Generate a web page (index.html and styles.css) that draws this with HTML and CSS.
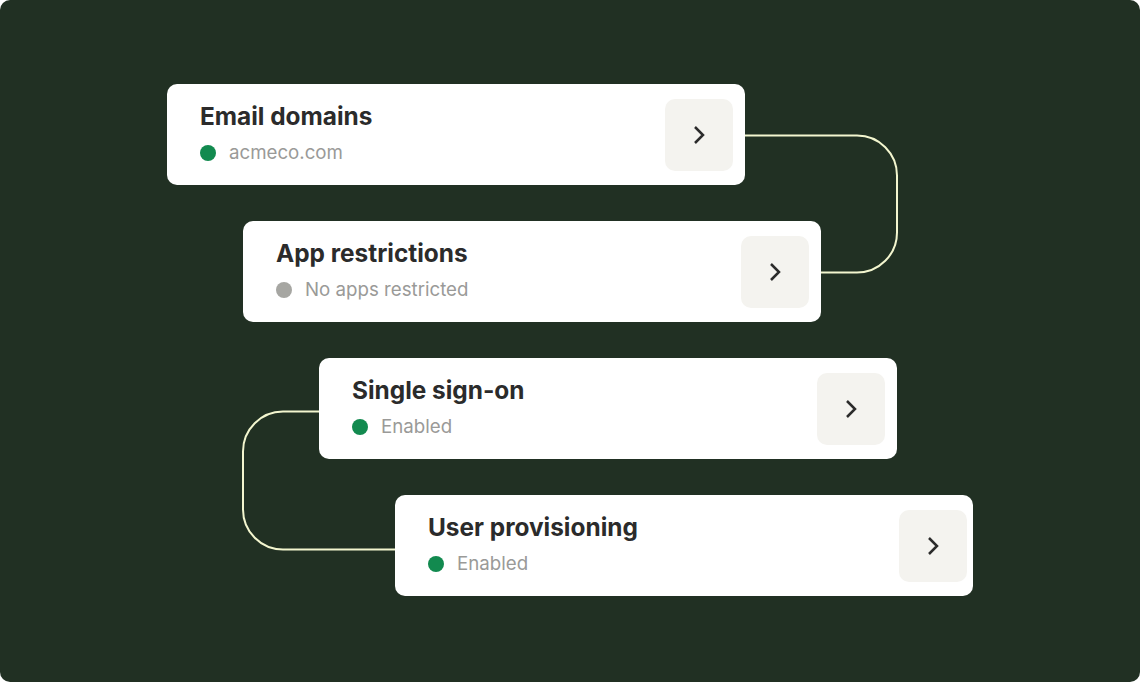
FILE: index.html
```html
<!DOCTYPE html>
<html lang="en">
<head>
    <meta charset="UTF-8">
    <meta name="viewport" content="width=device-width, initial-scale=1.0">
    <title>Access settings</title>
    <link rel="stylesheet" href="styles.css">
</head>
<body>
    <div class="frame">
        <svg class="links" width="1140" height="682" viewBox="0 0 1140 682">
            <path d="M745 135.5 H857 A40 40 0 0 1 897 175.5 V232.5 A40 40 0 0 1 857 272.5 H821" />
            <path d="M319 411.5 H283 A40 40 0 0 0 243 451.5 V509.5 A40 40 0 0 0 283 549.5 H395" />
        </svg>

        <div class="stack">
            <div class="card step-0">
                <div class="info">
                    <div class="title">Email domains</div>
                    <div class="status"><span class="dot on"></span>acmeco.com</div>
                </div>
                <button class="go" type="button">
                    <svg width="12" height="20" viewBox="0 0 12 20"><path d="M2 2 L10 10 L2 18" /></svg>
                </button>
            </div>

            <div class="card step-1">
                <div class="info">
                    <div class="title">App restrictions</div>
                    <div class="status"><span class="dot off"></span>No apps restricted</div>
                </div>
                <button class="go" type="button">
                    <svg width="12" height="20" viewBox="0 0 12 20"><path d="M2 2 L10 10 L2 18" /></svg>
                </button>
            </div>

            <div class="card step-2">
                <div class="info">
                    <div class="title">Single sign-on</div>
                    <div class="status"><span class="dot on"></span>Enabled</div>
                </div>
                <button class="go" type="button">
                    <svg width="12" height="20" viewBox="0 0 12 20"><path d="M2 2 L10 10 L2 18" /></svg>
                </button>
            </div>

            <div class="card step-3">
                <div class="info">
                    <div class="title">User provisioning</div>
                    <div class="status"><span class="dot on"></span>Enabled</div>
                </div>
                <button class="go" type="button">
                    <svg width="12" height="20" viewBox="0 0 12 20"><path d="M2 2 L10 10 L2 18" /></svg>
                </button>
            </div>
        </div>
    </div>
</body>
</html>
```

FILE: styles.css
```css
body {
    margin: 0;
    background: #ffffff;
    font-family: Inter, "Noto Sans", sans-serif;
}
.frame {
    position: relative;
    width: 1140px;
    height: 682px;
    background: #213023;
    border-radius: 10px;
    overflow: hidden;
}
.links {
    position: absolute;
    left: 0;
    top: 0;
}
.links path {
    fill: none;
    stroke: #f3f6cf;
    stroke-width: 2;
}
.stack {
    position: relative;
    display: flex;
    flex-direction: column;
    gap: 36px;
    padding: 84px 0 0 167px;
}
.card {
    width: 578px;
    height: 101px;
    box-sizing: border-box;
    display: flex;
    align-items: center;
    justify-content: space-between;
    padding: 0 12px 0 33px;
    background: #ffffff;
    border-radius: 10px;
}
.step-1 { margin-left: 76px; }
.step-2 { margin-left: 152px; }
.step-3 { margin-left: 228px; padding-right: 6px; }
.info {
    align-self: flex-start;
    padding-top: 17px;
}
.title {
    font-size: 24.4px;
    font-weight: 700;
    color: #2b2b2b;
    line-height: 30px;
}
.status {
    display: flex;
    align-items: center;
    gap: 13px;
    margin-top: 10px;
    font-size: 18.7px;
    color: #9a9a98;
    line-height: 24px;
}
.dot {
    width: 16px;
    height: 16px;
    border-radius: 50%;
}
.dot.on { background: #128a4f; }
.dot.off { background: #a6a6a2; }
.go {
    width: 68px;
    height: 72px;
    border: none;
    border-radius: 10px;
    background: #f4f3ef;
    display: flex;
    align-items: center;
    justify-content: center;
    padding: 0;
}
.go path {
    fill: none;
    stroke: #2b2b2b;
    stroke-width: 2.5;
}
```
